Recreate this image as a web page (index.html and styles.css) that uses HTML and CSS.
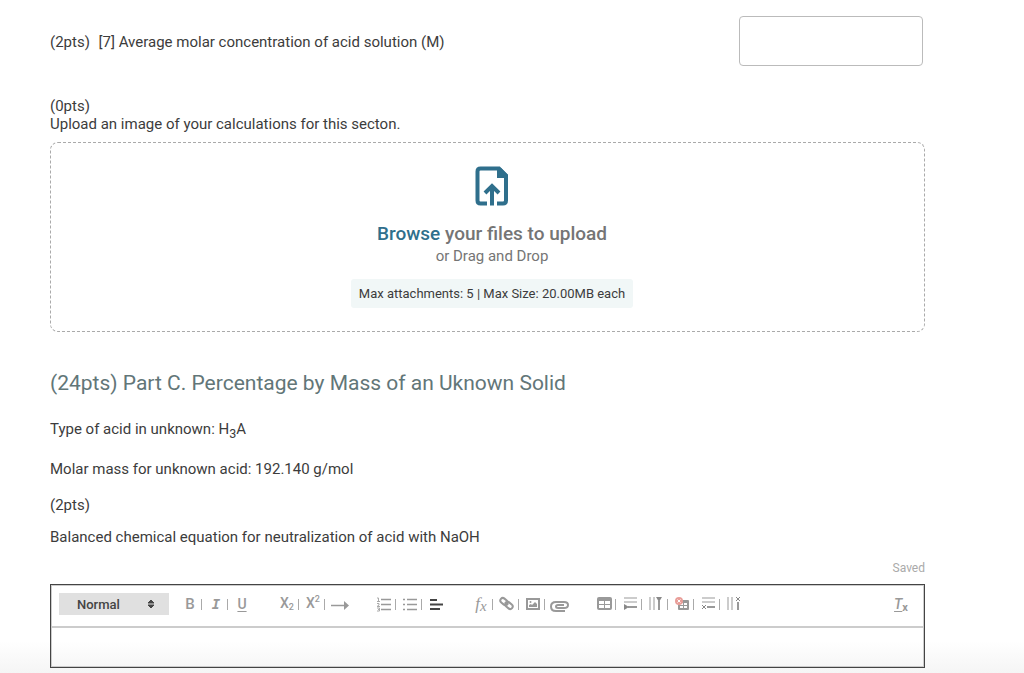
FILE: index.html
```html
<!DOCTYPE html>
<html lang="en">
    <head>
        <meta charset="utf-8">
        <title>Lab report</title>
        <link rel="stylesheet" href="styles.css">
    </head>
    <body>
        <main class="container">
            <div class="question">
                <label for="molar"><span class="pts">(2pts)</span> [7] Average molar concentration of acid solution (M)</label>
                <input class="answer" id="molar" type="text">
            </div>

            <div class="uploadTitle">
                <div>(0pts)</div>
                <div>Upload an image of your calculations for this secton.</div>
            </div>
            <div class="dropzone">
                <svg class="uploadIcon" viewBox="0 0 34 40">
                    <path d="M12 37.500H5.500Q2.500 37.500 2.500 34.500V5.500Q2.500 2.500 5.500 2.500H24L31 9.500V34.500Q31 37.500 28 37.500H22" fill="none" stroke="#2f6f8c" stroke-width="4"/>
                    <path d="M22 2h4l7 7v3H22z" fill="#2f6f8c"/>
                    <path d="M17 39.500V21M10 27l7-7 7 7" fill="none" stroke="#2f6f8c" stroke-width="4"/>
                </svg>
                <div class="browse"><a class="browseLink" href="#">Browse</a> your files to upload</div>
                <div class="drag">or Drag and Drop</div>
                <div class="limits">Max attachments: 5 | Max Size: 20.00MB each</div>
            </div>

            <h2 class="partTitle">(24pts) Part C. Percentage by Mass of an Uknown Solid</h2>
            <p class="acidType">Type of acid in unknown: H<sub>3</sub>A</p>
            <p class="molarMass">Molar mass for unknown acid: 192.140 g/mol</p>
            <p class="points">(2pts)</p>
            <label class="equation" for="equation">Balanced chemical equation for neutralization of acid with NaOH</label>
            <div class="saved">Saved</div>

            <div class="editor">
                <div class="toolbar">
                    <div class="picker">
                        <select class="format" aria-label="Text style">
                            <option>Normal</option>
                            <option>Heading</option>
                        </select>
                        <svg class="pickerArrow" viewBox="0 0 8 10"><path d="M1 4l3-3 3 3zM1 6h6l-3 3z" fill="#444" stroke="#444" stroke-linejoin="round"/></svg>
                    </div>
                    <div class="group">
                        <button class="tool" aria-label="Bold"><span class="bold">B</span></button>
                        <button class="tool" aria-label="Italic"><span class="italic">I</span></button>
                        <button class="tool" aria-label="Underline"><span class="underline">U</span></button>
                    </div>
                    <div class="group">
                        <button class="tool" aria-label="Subscript"><span class="script">X<sub>2</sub></span></button>
                        <button class="tool" aria-label="Superscript"><span class="script">X<sup>2</sup></span></button>
                        <button class="tool" aria-label="Arrow">
                            <svg class="wideIcon" viewBox="0 0 20 18"><path d="M2 10.500h14" fill="none" stroke="#999" stroke-width="1.500"/><path d="M15 6l5 4.500-5 4.500z" fill="#999"/></svg>
                        </button>
                    </div>
                    <div class="group">
                        <button class="tool" aria-label="Numbered list">
                            <svg class="icon" viewBox="0 0 18 18"><path d="M6 4.500h10M6 9.500h10M6 14.500h10" stroke="#999" stroke-width="1.500"/><path d="M2 3h1.500v3M2 6.500h3M2 8.500h2v1.500l-2 1.500h3M2 13h2.500v3H2M3 14.500h1" fill="none" stroke="#aaa"/></svg>
                        </button>
                        <button class="tool" aria-label="Bulleted list">
                            <svg class="icon" viewBox="0 0 18 18"><path d="M6 4.500h10M6 9.500h10M6 14.500h10M2 4.500h2M2 9.500h2M2 14.500h2" stroke="#999" stroke-width="1.500"/></svg>
                        </button>
                        <button class="tool" aria-label="Align">
                            <svg class="icon" viewBox="0 0 18 18"><path d="M3 5h7M3 9.500h13M3 14h10" stroke="#444" stroke-width="2"/></svg>
                        </button>
                    </div>
                    <div class="group">
                        <button class="tool" aria-label="Formula"><span class="formula">f<sub>x</sub></span></button>
                        <button class="tool" aria-label="Link">
                            <svg class="icon" viewBox="0 0 18 18"><g fill="none" stroke="#999" stroke-width="2"><rect x="2" y="4" width="8" height="5" rx="2.500" transform="rotate(40 6 6.500)"/><rect x="7" y="8" width="8" height="5" rx="2.500" transform="rotate(40 11 10.500)"/><path d="M7 7l3 3"/></g></svg>
                        </button>
                        <button class="tool" aria-label="Image">
                            <svg class="icon" viewBox="0 0 18 18"><rect x="3" y="4" width="12" height="10" fill="none" stroke="#999" stroke-width="2"/><path d="M5 12v-2l2-1 1 1 3-3 2 2v3z" fill="#999"/><circle cx="6.500" cy="7" r="1" fill="#999"/></svg>
                        </button>
                        <button class="tool" aria-label="Attachment">
                            <svg class="wideIcon" viewBox="0 0 20 18"><path d="M16 16H7Q2 16 2 11.500T7 7h8q4 0 4 3t-4 3H9q-2 0-2-1.500T9 10h6" fill="none" stroke="#999" stroke-width="2"/></svg>
                        </button>
                    </div>
                    <div class="group">
                        <button class="tool" aria-label="Insert table">
                            <svg class="icon" viewBox="0 0 18 18"><rect x="2" y="2" width="15" height="13" rx="2" fill="#999"/><path d="M4 6h5v3H4zM10 6h5v3h-5zM4 10h5v3H4zM10 10h5v3h-5z" fill="#fff"/></svg>
                        </button>
                        <button class="tool" aria-label="Insert row">
                            <svg class="icon" viewBox="0 0 18 18"><path d="M3 3h13M3 7h13" stroke="#ccc" stroke-width="2"/><path d="M7 12h9" stroke="#999" stroke-width="2"/><path d="M3 9l5 3-5 3z" fill="#888"/></svg>
                        </button>
                        <button class="tool" aria-label="Insert column">
                            <svg class="icon" viewBox="0 0 18 18"><path d="M3 2v13M7 2v13" stroke="#ccc" stroke-width="2"/><path d="M12 6v9" stroke="#999" stroke-width="2"/><path d="M9 2h6l-3 5z" fill="#888"/></svg>
                        </button>
                        <button class="tool" aria-label="Delete table">
                            <svg class="icon" viewBox="0 0 18 18"><rect x="5" y="5" width="11" height="10" rx="1" fill="#999"/><path d="M7 8h3v2H7zM11 8h3v2h-3zM7 11h3v2H7zM11 11h3v2h-3z" fill="#fff"/><circle cx="6" cy="6" r="4" fill="#e99e99"/><path d="M4.500 4.500l3 3M7.500 4.500l-3 3" stroke="#fff"/></svg>
                        </button>
                        <button class="tool" aria-label="Delete row">
                            <svg class="icon" viewBox="0 0 18 18"><path d="M3 3h13M3 7h13" stroke="#ccc" stroke-width="2"/><path d="M8 12h8" stroke="#999" stroke-width="2"/><path d="M3 10l4 4M7 10l-4 4" stroke="#888"/></svg>
                        </button>
                        <button class="tool" aria-label="Delete column">
                            <svg class="icon" viewBox="0 0 18 18"><path d="M3 2v13M7 2v13" stroke="#ccc" stroke-width="2"/><path d="M13 7v8" stroke="#999" stroke-width="2"/><path d="M11 2l4 4M15 2l-4 4" stroke="#888"/></svg>
                        </button>
                    </div>
                    <div class="group clearGroup">
                        <button class="tool" aria-label="Clear formatting"><span class="clear"><span class="clearT">T</span><sub>x</sub></span></button>
                    </div>
                </div>
                <textarea class="editorText" id="equation"></textarea>
            </div>
        </main>
    </body>
</html>
```

FILE: styles.css
```css
html, body {
    margin: 0;
}
body {
    min-height: 100vh;
    font-family: Roboto, "Liberation Sans", sans-serif;
    font-size: 15px;
    line-height: 18px;
    color: #3c3c3c;
    background: linear-gradient(to top, #f5f5f5, #fff 32px) fixed;
}
.container {
    padding: 16px 99px 5px 50px;
}
sub, sup {
    line-height: 0;
}
/* number question */
.question {
    display: flex;
    justify-content: space-between;
    align-items: center;
    padding-right: 2px;
}
.question label {
    padding-top: 2px;
}
.pts {
    margin-right: 5px;
}
.answer {
    box-sizing: border-box;
    width: 184px;
    height: 50px;
    padding: 8px;
    border: 1px solid #bbb;
    border-radius: 4px;
    background: #fff;
    font: inherit;
}
/* upload */
.uploadTitle {
    margin-top: 31px;
}
.dropzone {
    display: flex;
    flex-direction: column;
    align-items: center;
    margin-top: 9px;
    padding: 23px 0 23px 9px;
    border: 1px dashed #aaa;
    border-radius: 8px;
    color: #757575;
}
.uploadIcon {
    width: 34px;
    height: 40px;
}
.browse {
    margin-top: 16px;
    font-size: 19px;
    font-weight: 500;
    line-height: 24px;
}
.browseLink {
    color: #2f6f8c;
    text-decoration: none;
}
.drag {
    line-height: 20px;
}
.limits {
    margin-top: 13px;
    padding: 6px 8px 5px;
    border-radius: 3px;
    background: #f1f7f7;
    color: #3c3c3c;
    font-size: 13px;
}
/* part C */
.partTitle {
    margin: 39px 0 0;
    font-size: 21px;
    font-weight: 400;
    line-height: 24px;
    color: #627678;
}
p {
    margin: 0;
}
.acidType {
    margin-top: 25px;
}
.molarMass {
    margin-top: 22px;
}
.points {
    margin-top: 18px;
}
.equation {
    display: block;
    margin-top: 14px;
}
.saved {
    margin-top: 13px;
    text-align: right;
    font-size: 12px;
    color: #aaa;
}
/* editor */
.editor {
    display: flex;
    flex-direction: column;
    margin-top: 7px;
    border: 1px solid #444;
    box-shadow: inset 0 0 0 1px #ccc;
}
.toolbar {
    display: flex;
    align-items: center;
    gap: 19px;
    padding: 8px 11px 11px 8px;
    border-bottom: 2px solid #ccc;
}
.picker {
    position: relative;
    margin-right: -12px;
}
.format {
    display: block;
    appearance: none;
    width: 110px;
    height: 22px;
    padding: 0 18px;
    border: 0;
    background: #e0e0e0;
    color: #444;
    font-family: inherit;
    font-size: 13px;
    font-weight: 500;
}
.pickerArrow {
    position: absolute;
    top: 6px;
    right: 14px;
    width: 8px;
    height: 10px;
    pointer-events: none;
}
.group {
    display: flex;
    align-items: center;
}
.tool {
    display: flex;
    align-items: center;
    justify-content: center;
    box-sizing: content-box;
    width: 18px;
    height: 20px;
    padding: 0 3px 0 5px;
    border: 0;
    background: none;
    color: #999;
    font-family: inherit;
    font-size: 14px;
    cursor: pointer;
}
/* thin line between the tools of a group */
.tool:not(:last-child) {
    background: linear-gradient(#aaa, #aaa) right center / 1px 11px no-repeat;
}
.icon {
    flex: none;
    width: 18px;
    height: 18px;
}
.wideIcon {
    flex: none;
    width: 20px;
    height: 18px;
}
.bold {
    font-size: 15px;
    font-weight: 500;
}
.italic {
    font-family: "DejaVu Sans Mono", monospace;
    font-weight: 700;
    font-style: italic;
}
.underline {
    font-weight: 500;
    text-decoration: underline;
    text-decoration-thickness: 1px;
    text-underline-offset: 2px;
}
.script {
    padding-bottom: 3px;
    font-weight: 500;
}
.script sub, .script sup {
    font-size: 9px;
}
.script sub {
    vertical-align: -2px;
}
.formula {
    font-family: "Liberation Serif", serif;
    font-size: 17px;
    font-style: italic;
}
.formula sub {
    font-size: 15px;
    vertical-align: -2px;
}
.clearGroup {
    margin-left: auto;
}
.clear {
    font-weight: 500;
}
.clearT {
    font-style: italic;
    text-decoration: underline;
    text-decoration-thickness: 1px;
    text-underline-offset: 2px;
}
.clear sub {
    font-size: 11px;
    font-weight: 700;
    vertical-align: -2px;
}
.editorText {
    height: 39px;
    padding: 8px 12px;
    box-sizing: border-box;
    border: 0;
    outline: 0;
    resize: none;
    background: none;
    font: inherit;
}
```
